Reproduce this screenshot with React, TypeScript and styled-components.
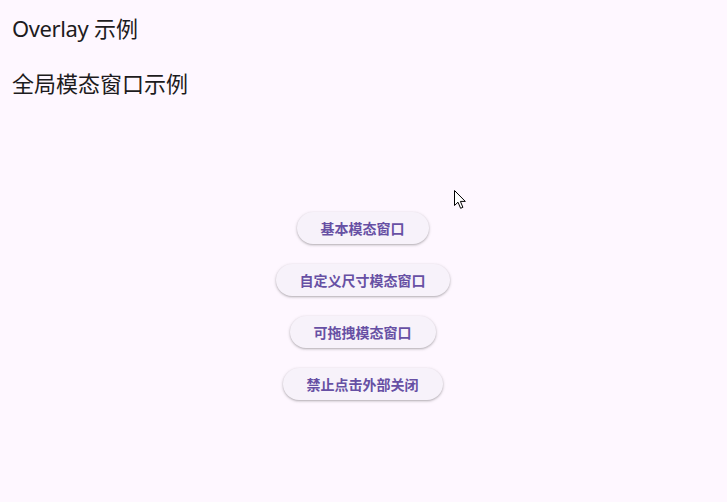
import React from "react";
import styled, { createGlobalStyle } from "styled-components";

const GlobalStyle = createGlobalStyle`
  html, body {
    margin: 0;
    padding: 0;
    background: #fef7ff;
  }
  body {
    font-family: "Noto Sans", "Noto Sans CJK SC", sans-serif;
    color: #1d1b20;
  }
  * { box-sizing: border-box; }
`;

const Page = styled.div`
  position: relative;
  width: 100%;
  min-height: 100vh;
  background: #fef7ff;
  display: flex;
  flex-direction: column;
  padding: 14px 12px 0;
`;

const Title = styled.div<{ $gap?: number }>`
  font-size: 22px;
  line-height: 28px;
  font-weight: 400;
  color: #1d1b20;
  margin-top: ${(p) => p.$gap ?? 0}px;
  white-space: nowrap;
`;

const Latin = styled.span`
  letter-spacing: -0.4px;
`;

const ButtonColumn = styled.div`
  display: flex;
  flex-direction: column;
  align-items: center;
  gap: 20px;
  margin-top: 115px;
  padding-right: 2px;
`;

const PillButton = styled.button`
  height: 32px;
  padding: 0 24px;
  border: none;
  border-radius: 16px;
  background: #f7f2fa;
  color: #6750a4;
  font-family: "Noto Sans CJK SC", "Noto Sans", sans-serif;
  font-size: 14px;
  font-weight: 600;
  line-height: 20px;
  box-shadow: 0 1px 2px rgba(0, 0, 0, 0.22), 0 1px 3px 1px rgba(0, 0, 0, 0.08);
  cursor: pointer;
  white-space: nowrap;
`;

const Cursor = styled.svg`
  position: absolute;
  left: 454px;
  top: 190px;
  width: 14px;
  height: 20px;
  pointer-events: none;
`;

const labels = ["基本模态窗口", "自定义尺寸模态窗口", "可拖拽模态窗口", "禁止点击外部关闭"];

export default function App() {
  return (
    <>
      <GlobalStyle />
      <Page>
        <Title>
          <Latin>Overlay</Latin> 示例
        </Title>
        <Title $gap={27}>全局模态窗口示例</Title>
        <ButtonColumn>
          {labels.map((l) => (
            <PillButton key={l}>{l}</PillButton>
          ))}
        </ButtonColumn>
        <Cursor viewBox="0 0 14 20">
          <path
            d="M0.5 0.5 L0.5 15.5 L4 12.2 L6.6 18.3 L8.9 17.3 L6.4 11.4 L11.3 11.4 Z"
            fill="#ffffff"
            stroke="#000000"
            strokeWidth="1"
            strokeLinejoin="miter"
          />
        </Cursor>
      </Page>
    </>
  );
}
